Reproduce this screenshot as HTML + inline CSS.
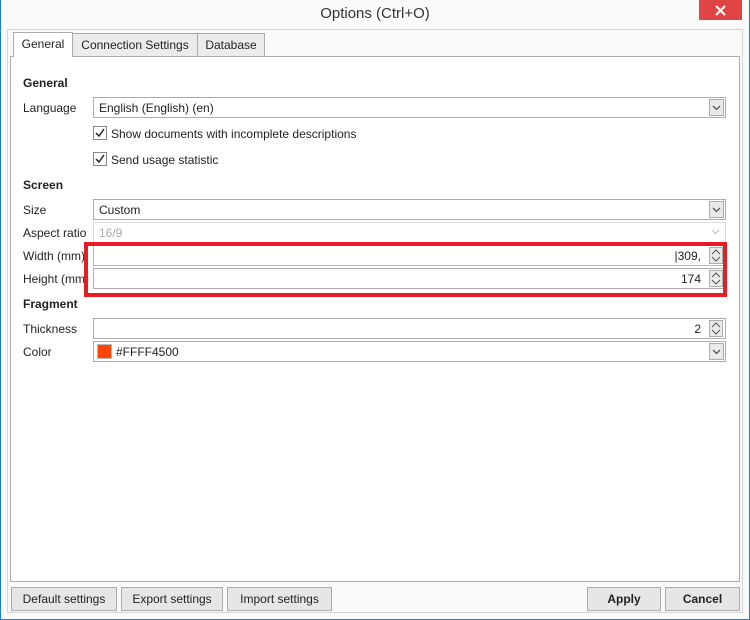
<!DOCTYPE html>
<html><head><style>
*{box-sizing:border-box;margin:0;padding:0}
body{width:750px;height:620px;background:#fafafa;font-family:"Liberation Sans",sans-serif;font-size:12px;color:#222;position:relative;overflow:hidden}
.abs{position:absolute}
.win{left:0;top:0;width:750px;height:620px;border:1px solid #1a7fd4;border-top:0}
.title{left:0;top:5px;width:750px;text-align:center;font-size:15px;color:#333}
.close{left:699px;top:0;width:43px;height:20px;background:#e04444}
.outer{left:7px;top:29px;width:736px;height:584px;border:1px solid #d4d4d4}
.tab{top:33px;height:24px;border:1px solid #acacac;background:#ececec;text-align:center;line-height:23px;font-size:12px}
.content{left:10px;top:56px;width:730px;height:526px;border:1px solid #acacac;background:#fff}
.h{font-weight:bold;font-size:12px}
.lbl{left:23px}
.box{left:93px;width:633px;height:21px;border:1px solid #acacac;background:#fff;line-height:20px;padding-left:5px}
.dd{position:absolute;right:1px;top:1px;width:15px;height:17px;border:1px solid #acacac;background:#eaeaea}
.dd svg,.spin svg{position:absolute;left:0;top:0}
.spin{position:absolute;right:2px;top:1px;width:14px;height:17px;border:1px solid #acacac;background:#eaeaea}
.num{position:absolute;right:24px;top:0}
.cb{left:93px;width:14px;height:14px;border:1px solid #888;background:#fff}
.btn{top:587px;height:24px;border:1px solid #acacac;background:#e6e6e6;text-align:center;line-height:23px}
</style></head><body>
<div class="abs win"></div>
<div class="abs title">Options (Ctrl+O)</div>
<div class="abs close"><svg width="43" height="20"><path d="M17 6l9 9M26 6l-9 9" stroke="#fff" stroke-width="2.2"/></svg></div>
<div class="abs outer"></div>
<div class="abs content"></div>
<div class="abs tab" style="left:72px;width:126px">Connection Settings</div>
<div class="abs tab" style="left:197px;width:68px">Database</div>
<div class="abs tab" style="left:13px;top:32px;width:60px;height:25px;background:#fff;border-bottom:0">General</div>

<div class="abs h lbl" style="top:76px">General</div>
<div class="abs lbl" style="top:101px">Language</div>
<div class="abs box" style="top:97px">English (English) (en)<div class="dd"><svg width="13" height="15"><path d="M3 6l3.5 3.5L10 6" stroke="#555" fill="none" stroke-width="1.3"/></svg></div></div>
<div class="abs cb" style="top:126px"><svg width="12" height="12"><path d="M2 6l3 3 5-7" stroke="#222" fill="none" stroke-width="1.5"/></svg></div><div class="abs" style="left:111px;top:127px">Show documents with incomplete descriptions</div>
<div class="abs cb" style="top:152px"><svg width="12" height="12"><path d="M2 6l3 3 5-7" stroke="#222" fill="none" stroke-width="1.5"/></svg></div><div class="abs" style="left:111px;top:153px">Send usage statistic</div>

<div class="abs h lbl" style="top:178px">Screen</div>
<div class="abs lbl" style="top:203px">Size</div>
<div class="abs box" style="top:199px">Custom<div class="dd"><svg width="13" height="15"><path d="M3 6l3.5 3.5L10 6" stroke="#555" fill="none" stroke-width="1.3"/></svg></div></div>
<div class="abs lbl" style="top:226px">Aspect ratio</div>
<div class="abs box" style="top:222px;border-color:#ddd;color:#aaa">16/9<div class="dd" style="border:0;background:none"><svg width="13" height="15"><path d="M3 6l3.5 3.5L10 6" stroke="#ccc" fill="none" stroke-width="1.3"/></svg></div></div>
<div class="abs lbl" style="top:249px">Width (mm)</div>
<div class="abs box" style="top:245px;border-color:#9bbbd8"><span class="num">|309,</span><div class="spin"><svg width="12" height="15"><path d="M2 6l4-4 4 4M2 9l4 4 4-4" stroke="#555" fill="none"/></svg></div></div>
<div class="abs lbl" style="top:272px">Height (mm)</div>
<div class="abs box" style="top:268px"><span class="num">174</span><div class="spin"><svg width="12" height="15"><path d="M2 6l4-4 4 4M2 9l4 4 4-4" stroke="#555" fill="none"/></svg></div></div>
<div class="abs" style="left:84px;top:242px;width:643px;height:55px;border:4px solid #e81c24"></div>

<div class="abs h lbl" style="top:297px">Fragment</div>
<div class="abs lbl" style="top:322px">Thickness</div>
<div class="abs box" style="top:318px"><span class="num">2</span><div class="spin"><svg width="12" height="15"><path d="M2 6l4-4 4 4M2 9l4 4 4-4" stroke="#555" fill="none"/></svg></div></div>
<div class="abs lbl" style="top:345px">Color</div>
<div class="abs box" style="top:341px;padding-left:22px">#FFFF4500<div class="abs" style="left:3px;top:2px;width:15px;height:15px;background:#ff4500;border:1px solid #bbb"></div><div class="dd"><svg width="13" height="15"><path d="M3 6l3.5 3.5L10 6" stroke="#555" fill="none" stroke-width="1.3"/></svg></div></div>

<div class="abs btn" style="left:11px;width:106px">Default settings</div>
<div class="abs btn" style="left:121px;width:102px">Export settings</div>
<div class="abs btn" style="left:227px;width:105px">Import settings</div>
<div class="abs btn" style="left:587px;width:74px;font-weight:bold">Apply</div>
<div class="abs btn" style="left:665px;width:75px;font-weight:bold">Cancel</div>
</body></html>
